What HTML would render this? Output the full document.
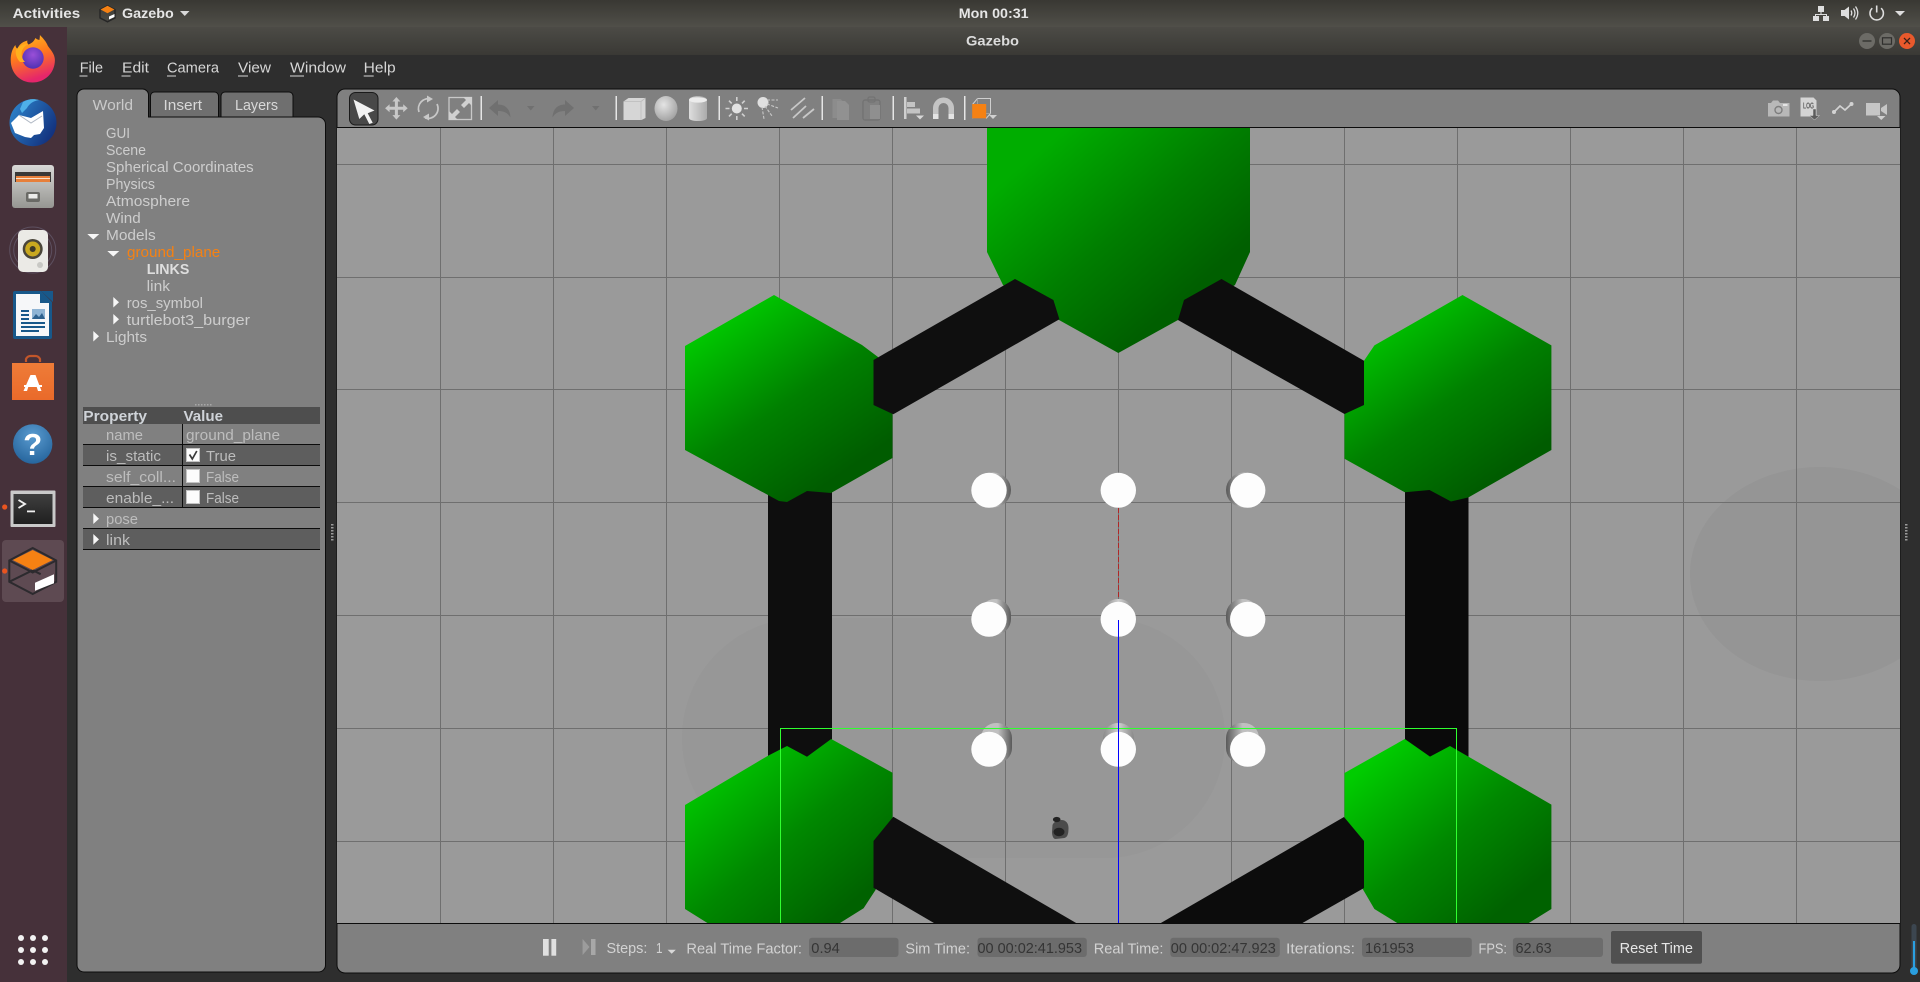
<!DOCTYPE html>
<html lang="en"><head><meta charset="utf-8"><title>Gazebo</title>
<style>
html,body{margin:0;padding:0;background:#2e2e2e;width:1920px;height:982px;overflow:hidden}
svg{display:block;position:absolute;left:0;top:0}
text{font-family:"Liberation Sans",sans-serif;font-size:15px;fill:#cfcfcf;white-space:pre}
.tree{fill:#cdcdcd}
.v{fill:#bdbdbd}
.b{font-weight:bold}
.m{fill:#d6d6d6}
.bt{fill:#d2d2d2;font-size:15px}
.val{fill:#353535;font-size:15px}
</style></head><body>
<svg width="1920" height="982" viewBox="0 0 1920 982" xmlns="http://www.w3.org/2000/svg">
<defs>
<linearGradient id="tb" x1="0" y1="0" x2="0" y2="1"><stop offset="0" stop-color="#393833"/><stop offset="1" stop-color="#504f49"/></linearGradient>
<linearGradient id="tt" x1="0" y1="0" x2="0" y2="1"><stop offset="0" stop-color="#4c4b46"/><stop offset="1" stop-color="#3a3935"/></linearGradient>
<linearGradient id="g1" x1="0.3" y1="0" x2="0.9" y2="0.6"><stop offset="0" stop-color="#00ad00"/><stop offset="0.55" stop-color="#007e00"/><stop offset="1" stop-color="#005f00"/></linearGradient>
<linearGradient id="g2" x1="0.3" y1="0" x2="0.85" y2="0.8"><stop offset="0" stop-color="#00cc00"/><stop offset="0.55" stop-color="#008000"/><stop offset="1" stop-color="#005c00"/></linearGradient>
<linearGradient id="g3" x1="0.2" y1="0.05" x2="0.9" y2="0.8"><stop offset="0" stop-color="#00cc00"/><stop offset="0.55" stop-color="#008800"/><stop offset="1" stop-color="#006200"/></linearGradient>
<linearGradient id="cr" x1="0" y1="0" x2="1" y2="0"><stop offset="0.55" stop-color="#c0c0c0"/><stop offset="1" stop-color="#5a5a5a"/></linearGradient>
<linearGradient id="cl" x1="0" y1="0" x2="1" y2="0"><stop offset="0" stop-color="#5a5a5a"/><stop offset="0.5" stop-color="#c0c0c0"/></linearGradient>
<linearGradient id="cm" x1="0" y1="0" x2="1" y2="0"><stop offset="0" stop-color="#8a8a8a"/><stop offset="0.5" stop-color="#cfcfcf"/><stop offset="1" stop-color="#8a8a8a"/></linearGradient>
<linearGradient id="fox" x1="0" y1="0" x2="0.3" y2="1"><stop offset="0" stop-color="#ffc51c"/><stop offset="0.5" stop-color="#ff7a1d"/><stop offset="1" stop-color="#e5266b"/></linearGradient>
<radialGradient id="foxi" cx="0.5" cy="0.35" r="0.7"><stop offset="0" stop-color="#9a4fd8"/><stop offset="1" stop-color="#4a2fb0"/></radialGradient>
<linearGradient id="tbd" x1="0" y1="0" x2="1" y2="0.6"><stop offset="0" stop-color="#2f8ad2"/><stop offset="1" stop-color="#13337f"/></linearGradient>
<linearGradient id="fc" x1="0" y1="0" x2="0" y2="1"><stop offset="0" stop-color="#d8d8d6"/><stop offset="1" stop-color="#969692"/></linearGradient>
<linearGradient id="ora" x1="0" y1="0" x2="0" y2="1"><stop offset="0" stop-color="#ee7c38"/><stop offset="1" stop-color="#ea6a2a"/></linearGradient>
<linearGradient id="termg" x1="0" y1="0" x2="0" y2="1"><stop offset="0" stop-color="#3f3f3f"/><stop offset="1" stop-color="#1f1f1f"/></linearGradient>
<radialGradient id="hp" cx="0.5" cy="0.3" r="0.8"><stop offset="0" stop-color="#5a9bd0"/><stop offset="1" stop-color="#1f5e96"/></radialGradient>
<radialGradient id="sph" cx="0.4" cy="0.35" r="0.7"><stop offset="0" stop-color="#e4e4e4"/><stop offset="1" stop-color="#a0a0a0"/></radialGradient>
<linearGradient id="cyl" x1="0" y1="0" x2="1" y2="0"><stop offset="0" stop-color="#dedede"/><stop offset="1" stop-color="#ababab"/></linearGradient>
<clipPath id="sc"><rect x="337" y="128" width="1563" height="795"/></clipPath>
</defs>

<!-- window background -->
<rect x="0" y="0" width="1920" height="982" fill="#2e2e2e"/>
<rect x="0" y="0" width="1920" height="27" fill="url(#tb)"/>
<rect x="67" y="27" width="1853" height="28" fill="url(#tt)"/>
<rect x="0" y="27" width="67" height="955" fill="#46313a"/>

<!-- top bar -->
<text x="12.7" y="18" textLength="67.5" lengthAdjust="spacingAndGlyphs" style="fill:#e6e6e6;font-weight:bold;font-size:14px">Activities</text>
<g transform="translate(100,5)">
 <path d="M7.5 .7 15 4.7v8.2L7.5 16.8 0 12.9V4.7z" fill="none" stroke="#262626" stroke-width="1.4"/>
 <path d="M7.5 .8 14.5 4.5 7.5 8.2 .5 4.5z" fill="#f58113"/>
 <path d="M9 11.5 14.5 9v3L9 14.5z" fill="#fff"/>
</g>
<text x="122" y="18" textLength="51.7" lengthAdjust="spacingAndGlyphs" style="fill:#e6e6e6;font-weight:bold;font-size:14px">Gazebo</text>
<path d="M180 11h9.5l-4.75 5z" fill="#d8d8d8"/>
<text x="958.8" y="18" textLength="69.8" lengthAdjust="spacingAndGlyphs" style="fill:#e6e6e6;font-weight:bold;font-size:14px">Mon 00:31</text>
<text x="966" y="45.5" textLength="53" lengthAdjust="spacingAndGlyphs" style="fill:#dcdcdc;font-weight:bold;font-size:14px">Gazebo</text>

<!-- tray -->
<g fill="#dedede">
 <rect x="1818" y="6" width="6" height="6"/><rect x="1813" y="16" width="6" height="5"/><rect x="1823" y="16" width="6" height="5"/>
 <path d="M1820.5 12h1v2h5.5v2h-1v-1h-10v1h-1v-2h5.500z"/>
 <path d="M1841 10h3.500l4.500-3.500v13l-4.500-3.500H1841z"/>
</g>
<g fill="none" stroke="#dedede" stroke-width="1.300">
 <path d="M1851 10.500q1.500 2.500 0 5"/><path d="M1853.500 8.500q3 4.500 0 9"/><path d="M1855.500 6.500q4.500 6.500 0 13"/>
</g>
<path d="M1872.300 8.200a6.700 6.700 0 1 0 8.800 0" fill="none" stroke="#dedede" stroke-width="1.600"/>
<path d="M1876.700 5.500v7" stroke="#dedede" stroke-width="1.600"/>
<path d="M1895 11h10l-5 5z" fill="#dedede"/>

<!-- window buttons -->
<circle cx="1867" cy="41" r="8" fill="#6c6b66"/><path d="M1862.500 41h9" stroke="#2f2f2d" stroke-width="1.300"/>
<circle cx="1887" cy="41" r="8" fill="#6c6b66"/><rect x="1882.500" y="37.800" width="9" height="6.400" fill="none" stroke="#2f2f2d" stroke-width="1.200"/>
<circle cx="1907" cy="41" r="8" fill="#e9592c"/><path d="M1904 38l6 6M1910 38l-6 6" stroke="#3a2018" stroke-width="1.300"/>

<!-- menu -->
<g class="menu">
<text class="m" x="79.700" y="72.700" textLength="23.300" lengthAdjust="spacingAndGlyphs">File</text>
<text class="m" x="122" y="72.700" textLength="27" lengthAdjust="spacingAndGlyphs">Edit</text>
<text class="m" x="167" y="72.700" textLength="52" lengthAdjust="spacingAndGlyphs">Camera</text>
<text class="m" x="238" y="72.700" textLength="33" lengthAdjust="spacingAndGlyphs">View</text>
<text class="m" x="290" y="72.700" textLength="56" lengthAdjust="spacingAndGlyphs">Window</text>
<text class="m" x="363.700" y="72.700" textLength="32" lengthAdjust="spacingAndGlyphs">Help</text>
<g fill="#d6d6d6"><rect x="79.500" y="75.500" width="8" height="1"/><rect x="121.500" y="75.500" width="9" height="1"/><rect x="167" y="75.500" width="9" height="1"/><rect x="238" y="75.500" width="10" height="1"/><rect x="290" y="75.500" width="14" height="1"/><rect x="363.700" y="75.500" width="10" height="1"/></g>
</g>

<!-- left panel -->
<path d="M150.500 117V96a4 4 0 0 1 4-4h60a4 4 0 0 1 4 4v21z" fill="#6f6f6f" stroke="#0c0c0c"/>
<path d="M221 117V96a4 4 0 0 1 4-4h64a4 4 0 0 1 4 4v21z" fill="#6f6f6f" stroke="#0c0c0c"/>
<path d="M77 965V96a7 7 0 0 1 7-7h58a6 6 0 0 1 6.500 6v22H318a7.500 7.500 0 0 1 7.500 7.500V965a7 7 0 0 1-7 7H84a7 7 0 0 1-7-7z" fill="#808080" stroke="#0c0c0c"/>
<text x="92.700" y="110" textLength="40.300" lengthAdjust="spacingAndGlyphs" style="fill:#cacaca">World</text>
<text x="163.500" y="110" textLength="38.500" lengthAdjust="spacingAndGlyphs" style="fill:#d8d8d8">Insert</text>
<text x="235" y="110" textLength="43" lengthAdjust="spacingAndGlyphs" style="fill:#d8d8d8">Layers</text>

<g class="treeg">
<text class="tree" x="106" y="138" textLength="24" lengthAdjust="spacingAndGlyphs">GUI</text>
<text class="tree" x="106" y="155" textLength="40" lengthAdjust="spacingAndGlyphs">Scene</text>
<text class="tree" x="106" y="172" textLength="147.700" lengthAdjust="spacingAndGlyphs">Spherical Coordinates</text>
<text class="tree" x="106" y="189" textLength="49" lengthAdjust="spacingAndGlyphs">Physics</text>
<text class="tree" x="106" y="206" textLength="84" lengthAdjust="spacingAndGlyphs">Atmosphere</text>
<text class="tree" x="106" y="223" textLength="34.700" lengthAdjust="spacingAndGlyphs">Wind</text>
<text class="tree" x="106" y="240" textLength="49.700" lengthAdjust="spacingAndGlyphs">Models</text>
<text x="127" y="257" textLength="93.300" lengthAdjust="spacingAndGlyphs" style="fill:#f58113">ground_plane</text>
<text class="tree b" x="146.700" y="274" textLength="42.600" lengthAdjust="spacingAndGlyphs" style="fill:#dedede">LINKS</text>
<text class="tree" x="146.700" y="291" textLength="23.300" lengthAdjust="spacingAndGlyphs">link</text>
<text class="tree" x="126.700" y="308" textLength="76.300" lengthAdjust="spacingAndGlyphs">ros_symbol</text>
<text class="tree" x="126.700" y="325" textLength="123.300" lengthAdjust="spacingAndGlyphs">turtlebot3_burger</text>
<text class="tree" x="106" y="342" textLength="41" lengthAdjust="spacingAndGlyphs">Lights</text>
</g>
<g fill="#f6f6f6">
 <path d="M87.300 234h12l-6 5.500z"/><path d="M107.300 251h12l-6 5.500z"/>
 <path d="M113.300 297v10.500l5.700-5.200z"/><path d="M113.300 314v10.500l5.700-5.200z"/><path d="M93.300 331v10.500l5.700-5.200z"/>
</g>
<g fill="#a8a8a8"><rect x="195" y="404" width="1.500" height="1.500"/><rect x="198" y="404" width="1.500" height="1.500"/><rect x="201" y="404" width="1.500" height="1.500"/><rect x="204" y="404" width="1.500" height="1.500"/><rect x="207" y="404" width="1.500" height="1.500"/><rect x="210" y="404" width="1.500" height="1.500"/></g>

<!-- property table -->
<rect x="83" y="407" width="237" height="17" fill="#4e4e4e"/>
<rect x="83" y="445" width="237" height="20" fill="#5e5e5e"/>
<rect x="83" y="487" width="237" height="20" fill="#5e5e5e"/>
<rect x="83" y="529" width="237" height="20" fill="#5e5e5e"/>
<g fill="#0c0c0c"><rect x="83" y="444" width="237" height="1"/><rect x="83" y="465" width="237" height="1"/><rect x="83" y="486" width="237" height="1"/><rect x="83" y="507" width="237" height="1"/><rect x="83" y="528" width="237" height="1"/><rect x="83" y="549" width="237" height="1"/><rect x="182" y="424" width="1" height="83"/></g>
<path d="M93.300 513.300v10.700l5.700-5.300z" fill="#f6f6f6"/><path d="M93.300 534v10.700l5.700-5.300z" fill="#f6f6f6"/>
<text class="b" x="83.300" y="421" textLength="63.700" lengthAdjust="spacingAndGlyphs" style="fill:#cfd3d8">Property</text>
<text class="b" x="183.500" y="421" textLength="39.500" lengthAdjust="spacingAndGlyphs" style="fill:#cfd3d8">Value</text>
<text class="v" x="106" y="440" textLength="37" lengthAdjust="spacingAndGlyphs">name</text>
<text class="v" x="186" y="440" textLength="94" lengthAdjust="spacingAndGlyphs">ground_plane</text>
<text class="v" x="106" y="461" textLength="55" lengthAdjust="spacingAndGlyphs">is_static</text>
<text class="v" x="206" y="461" textLength="30" lengthAdjust="spacingAndGlyphs">True</text>
<text class="v" x="106" y="482" textLength="70" lengthAdjust="spacingAndGlyphs">self_coll...</text>
<text class="v" x="206" y="482" textLength="33" lengthAdjust="spacingAndGlyphs">False</text>
<text class="v" x="106" y="503" textLength="68" lengthAdjust="spacingAndGlyphs">enable_...</text>
<text class="v" x="206" y="503" textLength="33" lengthAdjust="spacingAndGlyphs">False</text>
<text class="v" x="106" y="524" textLength="32" lengthAdjust="spacingAndGlyphs">pose</text>
<text class="v" x="106" y="545" textLength="24" lengthAdjust="spacingAndGlyphs">link</text>
<rect x="186.500" y="448.500" width="13" height="13" fill="#fcfcfc" stroke="#c4c4c4"/>
<path d="M189.500 454.500l2.800 4.500 4.500-8" fill="none" stroke="#3a3a3a" stroke-width="1.700"/>
<rect x="186.500" y="469.500" width="13" height="13" fill="#fcfcfc" stroke="#c4c4c4"/>
<rect x="186.500" y="490.500" width="13" height="13" fill="#fcfcfc" stroke="#c4c4c4"/>

<!-- splitter dots -->
<g fill="#9a9a9a"><rect x="331" y="524" width="2.500" height="1.500"/><rect x="331" y="527" width="2.500" height="1.500"/><rect x="331" y="530" width="2.500" height="1.500"/><rect x="331" y="533" width="2.500" height="1.500"/><rect x="331" y="536" width="2.500" height="1.500"/><rect x="331" y="539" width="2.500" height="1.500"/>
<rect x="1905" y="524" width="2.500" height="1.500"/><rect x="1905" y="527" width="2.500" height="1.500"/><rect x="1905" y="530" width="2.500" height="1.500"/><rect x="1905" y="533" width="2.500" height="1.500"/><rect x="1905" y="536" width="2.500" height="1.500"/><rect x="1905" y="539" width="2.500" height="1.500"/></g>

<!-- viewport frame -->
<path d="M337 965V97a8 8 0 0 1 8-8h1547a8 8 0 0 1 8 8v868a8 8 0 0 1-8 8H345a8 8 0 0 1-8-8z" fill="#808080" stroke="#0c0c0c"/>
<rect x="337" y="127" width="1563" height="1" fill="#0c0c0c"/>
<rect x="337" y="923" width="1563" height="1" fill="#0c0c0c"/>

<!-- scene -->
<g clip-path="url(#sc)">
 <rect x="337" y="128" width="1563" height="795" fill="#9a9a9a"/>
 <rect x="682" y="618" width="543" height="240" rx="120" fill="#979797"/>
 <ellipse cx="1820" cy="574" rx="130" ry="107" fill="#959595"/>
 <g stroke="#6f6f6f" stroke-width="1" shape-rendering="crispEdges">
  <path d="M440.500 128V923M553.500 128V923M666.500 128V923M779.500 128V923M892.500 128V923M1005.500 128V923M1118.500 128V923M1231.500 128V923M1344.500 128V923M1457.500 128V923M1570.500 128V923M1683.500 128V923M1796.500 128V923"/>
  <path d="M337 164.500H1900M337 277.500H1900M337 389.500H1900M337 502.500H1900M337 615.500H1900M337 728.500H1900M337 841.500H1900"/>
 </g>
 <!-- vertical black bars -->
 <rect x="768" y="488" width="64" height="272" fill="#0e0e0e"/>
 <rect x="1405" y="488" width="63.500" height="272" fill="#0a0a0a"/>
 <!-- hexes -->
 <polygon points="987,128 1250,128 1250,252 1235,285 1178,320 1118.300,353 1059,320 1003,285 987,252" fill="url(#g1)"/>
 <polygon points="774,295 862,345 878,357 892.500,414 892.500,458 831,493 807,491 787,502 779,501 685,450 685,346" fill="url(#g2)"/>
 <polygon points="1462.500,295 1551.400,345.400 1551.400,450 1468.500,497.400 1451,501.500 1429.500,490 1404.800,492.300 1344.500,458.700 1344.500,414 1364,360.700 1374.400,345.400" fill="url(#g2)"/>
 <polygon points="685,805 768,755.700 787,746 807,756.700 831.200,739 892.500,772.700 892.500,840 875.500,890 863.600,908.300 840,923 707.400,923 685,909" fill="url(#g3)"/>
 <polygon points="1344.500,773 1404.800,739 1430,756.600 1450,746 1551.400,804.600 1551.400,909 1528,923.500 1398,923.500 1374.400,909 1362.700,889 1344.500,817" fill="url(#g3)"/>
 <!-- diagonal bars -->
 <polygon points="873.500,360 1015,279 1053.400,300 1059.400,319.300 893.300,414.300 873.500,405" fill="#0f0f0f"/>
 <polygon points="1221.500,279 1184,300 1178,320 1344.500,414 1364,405 1364,360.700" fill="#0d0d0d"/>
 <polygon points="893.300,816.700 873.500,841 873.500,887.700 934.800,923.500 1077,923.500" fill="#0f0f0f"/>
 <polygon points="1160,923.500 1344,817 1364,841 1364,888 1301.600,923.500" fill="#0c0c0c"/>
 <!-- cylinders -->
 <ellipse cx="993" cy="490" rx="18" ry="17.500" fill="url(#cr)"/>
 <ellipse cx="1244" cy="490" rx="18" ry="17.500" fill="url(#cl)"/>
 <rect x="979" y="599" width="32" height="36" rx="16" fill="url(#cr)"/>
 <rect x="1103" y="599" width="31" height="30" rx="15" fill="url(#cm)"/>
 <rect x="1226" y="599" width="33" height="36" rx="16" fill="url(#cl)"/>
 <rect x="981" y="723" width="31" height="40" rx="15" fill="url(#cr)"/>
 <rect x="1103" y="723" width="31" height="40" rx="15" fill="url(#cm)"/>
 <rect x="1226" y="723" width="33" height="40" rx="15" fill="url(#cl)"/>
 <!-- white tops -->
 <g fill="#fdfdfd">
  <ellipse cx="989" cy="490.300" rx="17.700" ry="17.500"/><ellipse cx="1118.300" cy="490.300" rx="17.700" ry="17.500"/><ellipse cx="1247.700" cy="490.300" rx="17.700" ry="17.500"/>
  <ellipse cx="989" cy="619.300" rx="17.700" ry="17.500"/><ellipse cx="1118.300" cy="619.300" rx="17.700" ry="17.500"/><ellipse cx="1247.700" cy="619.300" rx="17.700" ry="17.500"/>
  <ellipse cx="989" cy="749.300" rx="17.700" ry="17.500"/><ellipse cx="1118.300" cy="749.300" rx="17.700" ry="17.500"/><ellipse cx="1247.700" cy="749.300" rx="17.700" ry="17.500"/>
 </g>
 <!-- axes and selection box -->
 <path d="M1118.500 508V598" stroke="#b02626" stroke-width="1" stroke-dasharray="5 2" shape-rendering="crispEdges"/>
 <path d="M780.500 923V728.500H1456.500V923" fill="none" stroke="#2fff2f" stroke-width="1" shape-rendering="crispEdges"/>
 <path d="M1118.500 620V923" stroke="#0000ff" stroke-width="1" shape-rendering="crispEdges"/>
 <!-- robot -->
 <path d="M1052.500 825c1-3 5-5 9-5s7 3 7 8c0 6-1 9-4 10l-9 1c-2 0-3.500-3-3.500-7z" fill="#4b4b4b"/>
 <ellipse cx="1056.700" cy="819.500" rx="3.800" ry="2.600" fill="#222"/>
 <ellipse cx="1059" cy="832" rx="5.500" ry="4.200" fill="#222"/>
</g>

<!-- toolbar -->
<rect x="349.500" y="92.500" width="28.500" height="32.500" rx="6" fill="#484848" stroke="#1a1a1a"/>
<path d="M353.500 99.500l21 11-6.800 2.700 5 9.500-3.400 1.300-5-9.700-5 4.700z" fill="#f2f2f2"/>
<g fill="#c8c8c8">
 <path d="M396.400 97l4 4.500h-2.500v5.300h5.300v-2.500l4.500 4-4.500 4v-2.500h-5.300v5.300h2.500l-4 4.500-4-4.500h2.500v-5.300h-5.300v2.500l-4.500-4 4.500-4v2.500h5.300v-5.300h-2.500z"/>
</g>
<g fill="none" stroke="#c8c8c8" stroke-width="1.700">
 <path d="M419 112a10 10 0 0 1 12-13"/><path d="M437 104a10 10 0 0 1-12 14"/>
 <rect x="449" y="97.500" width="22.500" height="22" stroke-width="1.300"/>
</g>
<path d="M427 95.500l6 3.500-6 3.500zM429 120.500l-6-3.500 6-3.500z" fill="#c8c8c8"/>
<path d="M472 97v9l-3-3-5 5-3-3 5-5-3-3zM449 120v-9l3 3 5-5 3 3-5 5 3 3z" fill="#d0d0d0"/>
<g fill="#e6e6e6"><rect x="480.500" y="96" width="1.500" height="24"/><rect x="615.500" y="96" width="1.500" height="24"/><rect x="718.500" y="96" width="1.500" height="24"/><rect x="821.500" y="96" width="1.500" height="24"/><rect x="892.500" y="96" width="1.500" height="24"/><rect x="964" y="96" width="1.500" height="24"/></g>
<path d="M489 108l9-8v4.500c7 0 12 4 12.500 13-3-5-7-6.500-12.500-6.500v5z" fill="#707070"/>
<path d="M574 108l-9-8v4.500c-7 0-12 4-12.500 13 3-5 7-6.500 12.500-6.500v5z" fill="#707070"/>
<path d="M527 106h7.500l-3.750 4.500zM592 106h7.500l-3.750 4.500z" fill="#707070"/>
<path d="M623.500 101.500l5-3.500h17v20l-4 2h-18z" fill="#d6d6d6"/><path d="M623.500 101.500h17.500l4.500-3.500-4.500 3.500V120" fill="none" stroke="#bcbcbc" stroke-width=".8"/>
<ellipse cx="666" cy="108.500" rx="11.500" ry="12.500" fill="url(#sph)"/>
<path d="M689 100c0-5 18-5 18 0v18c0 4-18 4-18 0z" fill="url(#cyl)"/><ellipse cx="698" cy="100" rx="9" ry="2.600" fill="#ececec"/>
<g stroke="#d0d0d0" stroke-width="1.600" fill="none"><path d="M736.800 97v4M736.800 116v4M725.500 108.500h4M744 108.500h4M729 100.700l2.700 2.700M742 113.700l2.700 2.700M729 116.400l2.700-2.700M742 103.400l2.700-2.700"/></g>
<circle cx="736.800" cy="108.500" r="5" fill="#e2e2e2"/>
<circle cx="763" cy="102.500" r="5.500" fill="#e0e0e0"/>
<g stroke="#c8c8c8" stroke-width="1.100" fill="none" stroke-dasharray="3 1.500"><path d="M767 100l11 0M767 104l11 4M765 106l7 10M762 107l2 12"/></g>
<g stroke="#c8c8c8" stroke-width="1.800" fill="none"><path d="M791 110l14-12M793 118l13-12M803 118l11-9"/></g>
<path d="M832.500 99h8l4 4v15h-12z" fill="#8c8c8c"/><path d="M837 101h8l4 4v15h-12z" fill="#919191"/>
<rect x="863" y="100" width="17" height="20" rx="2" fill="none" stroke="#737373" stroke-width="1.400"/><rect x="868" y="97" width="7" height="5" rx="1.500" fill="none" stroke="#737373" stroke-width="1.300"/><path d="M870 105h10v14h-10z" fill="#8f8f8f"/>
<path d="M904 97h2.500v22H904z" fill="#d0d0d0"/>
<path d="M907 102h8v5h-8zM907 108.500h13v5h-13z" fill="#c4c4c4"/><path d="M916 115.500h8l-4 4z" fill="#d8d8d8"/>
<path d="M933 119v-11a10.500 10.500 0 0 1 21 0v11h-5.500v-11a5 5 0 0 0-10 0v11z" fill="#c4c4c4"/><path d="M933 119v-5h5.500v5zM948.500 119v-5h5.500v5z" fill="#e4e4e4"/>
<path d="M972.500 104.500l5-6h13v15l-4.500 5" fill="none" stroke="#cfcfcf" stroke-width="1"/><path d="M977.500 98.500v15h13M972.500 118.500l5-5" fill="none" stroke="#a8a8a8" stroke-width=".8"/>
<rect x="972.200" y="104" width="14" height="14.300" fill="#f58113"/>
<path d="M989 115h8l-4 4z" fill="#d0d0d0"/>

<!-- right toolbar icons -->
<path d="M1768 103h3l2-2.500h5l2 2.500h9.500v13.500H1768z" fill="#b8b8b8"/><circle cx="1778.500" cy="110" r="3.500" fill="none" stroke="#7e7e7e" stroke-width="1.400"/><rect x="1783" y="104" width="4.500" height="2" fill="#e4e4e4"/>
<path d="M1800.500 97.500h13l3 3v16h-16z" fill="#d4d4d4"/>
<text x="1803" y="108.500" textLength="11" lengthAdjust="spacingAndGlyphs" style="font-size:8px;fill:#5e5e5e;font-weight:bold">LOG</text>
<path d="M1813 109h3v6.500h3.500l-5 4.500-5-4.500h3.500z" fill="#5c5c5c" stroke="#d4d4d4" stroke-width=".5"/>
<path d="M1834 112l6-6 5 4 7-6.500" fill="none" stroke="#d2d2d2" stroke-width="1.700"/>
<g fill="#d2d2d2"><circle cx="1834" cy="112" r="2"/><circle cx="1851.500" cy="104" r="2"/></g>
<path d="M1866 103h14v12.500h-14zM1881 108l6-4v11l-6-4z" fill="#c6c6c6"/><path d="M1877 116h8.500l-4.250 4z" fill="#cfcfcf"/>

<!-- bottom bar -->
<g fill="#e0e0e0"><rect x="543" y="939" width="5.700" height="16.700"/><rect x="551.400" y="939" width="4.800" height="16.700"/></g>
<path d="M582.600 939l6.900 8-6.900 8z" fill="#9c9c9c"/><rect x="591" y="939" width="4.500" height="16" fill="#a8a8a8"/>
<text class="bt" x="606.500" y="953" textLength="40.900" lengthAdjust="spacingAndGlyphs">Steps:</text>
<text class="bt" x="656" y="953" textLength="6.500" lengthAdjust="spacingAndGlyphs">1</text>
<path d="M667.600 949.700h8.200l-4.100 4z" fill="#d8d8d8"/>
<text class="bt" x="686.400" y="953.500" textLength="115.600" lengthAdjust="spacingAndGlyphs">Real Time Factor:</text>
<text class="bt" x="905.400" y="953.500" textLength="64.600" lengthAdjust="spacingAndGlyphs">Sim Time:</text>
<text class="bt" x="1093.700" y="953.500" textLength="69.800" lengthAdjust="spacingAndGlyphs">Real Time:</text>
<text class="bt" x="1286" y="953.500" textLength="69" lengthAdjust="spacingAndGlyphs">Iterations:</text>
<text class="bt" x="1478.500" y="953.500" textLength="28.500" lengthAdjust="spacingAndGlyphs">FPS:</text>
<g fill="#6c6c6c">
 <rect x="809" y="937.700" width="89.500" height="19.300" rx="3"/>
 <rect x="977.500" y="937.700" width="109.300" height="19.300" rx="3"/>
 <rect x="1170.300" y="937.700" width="109.500" height="19.300" rx="3"/>
 <rect x="1362" y="937.700" width="109.800" height="19.300" rx="3"/>
 <rect x="1512.900" y="937.700" width="90.100" height="19.300" rx="3"/>
</g>
<text class="val" x="811.300" y="953" textLength="28.500" lengthAdjust="spacingAndGlyphs">0.94</text>
<text class="val" x="977.500" y="953" textLength="104.500" lengthAdjust="spacingAndGlyphs">00 00:02:41.953</text>
<text class="val" x="1170.800" y="953" textLength="105" lengthAdjust="spacingAndGlyphs">00 00:02:47.923</text>
<text class="val" x="1365" y="953" textLength="49" lengthAdjust="spacingAndGlyphs">161953</text>
<text class="val" x="1515.500" y="953" textLength="36.200" lengthAdjust="spacingAndGlyphs">62.63</text>
<rect x="1611" y="931" width="91" height="32.700" rx="2" fill="#505050"/>
<text x="1619.600" y="953" textLength="73.400" lengthAdjust="spacingAndGlyphs" style="fill:#e6e6e6">Reset Time</text>

<!-- volume slider -->
<rect x="1911.500" y="924" width="5" height="50" rx="2.500" fill="#3c4650"/>
<rect x="1913" y="941" width="2" height="30" fill="#2a9fe0"/>
<circle cx="1914" cy="971" r="4" fill="#2a9fe0"/>

<!-- dock icons -->
<!-- firefox -->
<path d="M10.700 60c0-6 1.500-11 4.700-15 .2 2 1 3 2 3.800 1.500-4 5-7 10-8.300-.5 1.500 0 3 1 4 3-1 5.500-3 7-6.500 1 1 2 1.500 4 2 .5-3 .5-3.500 .5-5 3.500 3.500 6.500 7 8 11 2.500 3.500 7 8 7 14 0 13-10 22.500-22.500 22.500S10.700 73 10.700 60z" fill="url(#fox)"/>
<circle cx="33" cy="58" r="10.700" fill="url(#foxi)"/>
<path d="M16 50c2-3 6-6 12-6-3 2-5 4-6 7-1 4 0 8 3 11l-5 0c-3-3-5-8-4-12z" fill="#ffb01d"/>
<!-- thunderbird -->
<circle cx="33" cy="122.700" r="23.500" fill="url(#tbd)"/>
<path d="M23 102c5-3 10-3.500 16-2-6 1-10 4-12 8l-5 5-2-4z" fill="#4fb0e8"/>
<path d="M11 123l8-8 12 3 12-7 1 17-4 6-6 1-3 3-6-1-10-4z" fill="#fff"/>
<path d="M19 115l12 8 11-7" fill="none" stroke="#b0b8c4" stroke-width="1"/>
<!-- files -->
<rect x="12" y="165" width="42" height="43" rx="3" fill="url(#fc)"/>
<rect x="15" y="172" width="36" height="10" fill="#3a3836"/>
<rect x="16" y="176" width="34" height="6" fill="#e77f3a"/><rect x="16" y="178" width="34" height="1" fill="#fbe1c8"/>
<rect x="26" y="192" width="14" height="10" rx="2" fill="#6a6a66"/><rect x="28.500" y="194" width="9" height="4.500" fill="#ececea"/>
<!-- rhythmbox -->
<circle cx="32.700" cy="250" r="23" fill="none" stroke="#5d5060" stroke-width="1"/>
<circle cx="32.700" cy="250" r="19" fill="none" stroke="#5d5060" stroke-width="1"/>
<rect x="18" y="230" width="30" height="42" rx="5" fill="#ebeae6"/>
<circle cx="32.700" cy="249" r="10" fill="#4a453a"/><circle cx="32.700" cy="249" r="7.500" fill="#c9a81f"/><circle cx="32.700" cy="249" r="3" fill="#3d3828"/>
<circle cx="40" cy="265" r="3" fill="#c8c8c4"/>
<!-- writer -->
<path d="M13 293a2 2 0 0 1 2-2h26l11 11v35a2 2 0 0 1-2 2H15a2 2 0 0 1-2-2z" fill="#18588a"/>
<path d="M16 294h24v9h9v33H16z" fill="#f6f7f9"/>
<path d="M41 291h12v11z" fill="#18588a"/>
<g fill="#18588a"><rect x="21" y="310" width="8" height="2"/><rect x="21" y="314" width="8" height="2"/><rect x="21" y="318" width="8" height="2"/><rect x="21" y="322" width="24" height="2"/><rect x="21" y="326" width="24" height="2"/><rect x="21" y="330" width="18" height="2"/></g>
<rect x="32" y="309" width="13" height="10" fill="#8fb4d4"/><path d="M32 319l4-5 3 3 3-4 3 6z" fill="#2e618e"/>
<!-- software -->
<path d="M12 363h42v37H12z" fill="url(#ora)"/>
<path d="M26 362v-3a5 5 0 0 1 5-3h4a5 5 0 0 1 5 3v3" fill="none" stroke="#c2562a" stroke-width="2.200"/>
<path d="M30.500 375h5l6 16h-3.500l-1.300-4h-8.400l-1.300 4h-3.500z" fill="#fff"/>
<rect x="24" y="385" width="18" height="2" fill="#fff"/>
<!-- help -->
<circle cx="32.700" cy="444" r="19.700" fill="url(#hp)"/>
<text x="32.700" y="455" text-anchor="middle" style="font-size:31px;font-weight:bold;fill:#fff">?</text>
<!-- terminal -->
<rect x="10.500" y="490.500" width="45" height="36.500" rx="1" fill="#c9c9c9"/>
<rect x="13.500" y="494" width="39" height="30" fill="url(#termg)"/>
<path d="M18.500 500l6.500 4-6.500 4" fill="none" stroke="#f0f0f0" stroke-width="1.900"/>
<rect x="27" y="510.500" width="8" height="1.800" fill="#f0f0f0"/>
<circle cx="4.700" cy="507" r="2.600" fill="#e95420"/>
<!-- gazebo -->
<rect x="2" y="540" width="62" height="62" rx="4" fill="#5e4a52"/>
<path d="M32.700 548l23.500 12.500v21.300L32.700 594 9.300 581.800v-21.300z" fill="none" stroke="#2c2a2e" stroke-width="2"/>
<path d="M9.300 560.500l23.400 12 23.500-12M9.300 581.800l23.400-11.600 8 4" fill="none" stroke="#2c2a2e" stroke-width="2"/>
<path d="M32.700 550l20 10-20 10-20-10z" fill="#f58113"/>
<path d="M35 582.700l19-8.400v9l-19 7.400z" fill="#fff"/>
<circle cx="4.700" cy="571" r="2.600" fill="#e95420"/>
<!-- grid -->
<g fill="#f2f2f2">
 <circle cx="21" cy="938" r="3"/><circle cx="33" cy="938" r="3"/><circle cx="45" cy="938" r="3"/>
 <circle cx="21" cy="950" r="3"/><circle cx="33" cy="950" r="3"/><circle cx="45" cy="950" r="3"/>
 <circle cx="21" cy="962" r="3"/><circle cx="33" cy="962" r="3"/><circle cx="45" cy="962" r="3"/>
</g>
</svg>
</body></html>
